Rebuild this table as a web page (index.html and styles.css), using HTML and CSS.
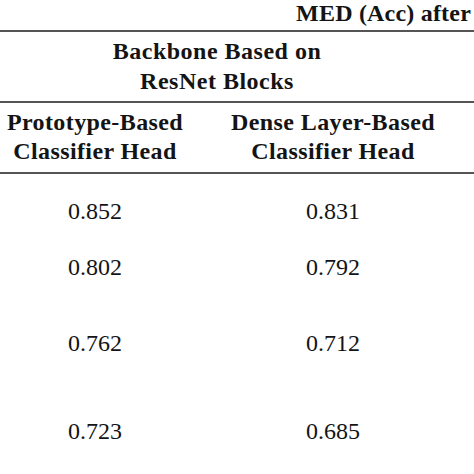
FILE: index.html
```html
<!DOCTYPE html>
<html>
<head>
<meta charset="utf-8">
<link rel="stylesheet" href="styles.css">
</head>
<body>
<div class="table">
  <div class="cell title">MED (Acc) after</div>
  <div class="cell group">Backbone Based on<br>ResNet Blocks</div>
  <div class="cell group-rest"></div>
  <div class="cell head first">Prototype-Based<br>Classifier Head</div>
  <div class="cell head">Dense Layer-Based<br>Classifier Head</div>
  <div class="cell head-rest"></div>

  <div class="cell num first r1">0.852</div>
  <div class="cell num r1">0.831</div>
  <div class="cell rest r1"></div>

  <div class="cell num first r2">0.802</div>
  <div class="cell num r2">0.792</div>
  <div class="cell rest r2"></div>

  <div class="cell num first r3">0.762</div>
  <div class="cell num r3">0.712</div>
  <div class="cell rest r3"></div>

  <div class="cell num first r4">0.723</div>
  <div class="cell num r4">0.685</div>
  <div class="cell rest r4"></div>
</div>
</body>
</html>
```

FILE: styles.css
```css
html, body {
  margin: 0;
  padding: 0;
  background: #ffffff;
  overflow: hidden;
}

body {
  width: 474px;
  height: 474px;
  font-family: "Liberation Serif", "Times New Roman", serif;
  color: #141414;
}

.table {
  display: grid;
  grid-template-columns: 211px 244px 19px;
  width: 474px;
}

.cell {
  box-sizing: border-box;
  font-size: 24px;
  text-align: center;
}

.first {
  padding-right: 21px;
}

.title {
  grid-column: 1 / 4;
  text-align: right;
  padding-right: 3px;
  font-weight: bold;
  letter-spacing: 0.2px;
  line-height: 27px;
  height: 32px;
  border-bottom: 2px solid #555555;
  white-space: nowrap;
}

.group {
  grid-column: 1 / 3;
  font-weight: bold;
  letter-spacing: 0.5px;
  line-height: 30px;
  padding-top: 4px;
  padding-right: 21px;
  height: 71px;
  border-bottom: 2px solid #555555;
}

.group-rest {
  border-bottom: 2px solid #555555;
}

.head {
  font-weight: bold;
  letter-spacing: 0.4px;
  line-height: 29px;
  padding-top: 5px;
  height: 71px;
  border-bottom: 2px solid #555555;
  white-space: nowrap;
}

.head-rest {
  border-bottom: 2px solid #555555;
}

.num {
  line-height: 30px;
  padding-top: 22px;
}

.r1 { height: 56px; }
.r2 { height: 76px; }
.r3 { height: 88px; }
.r4 { height: 80px; }
```
